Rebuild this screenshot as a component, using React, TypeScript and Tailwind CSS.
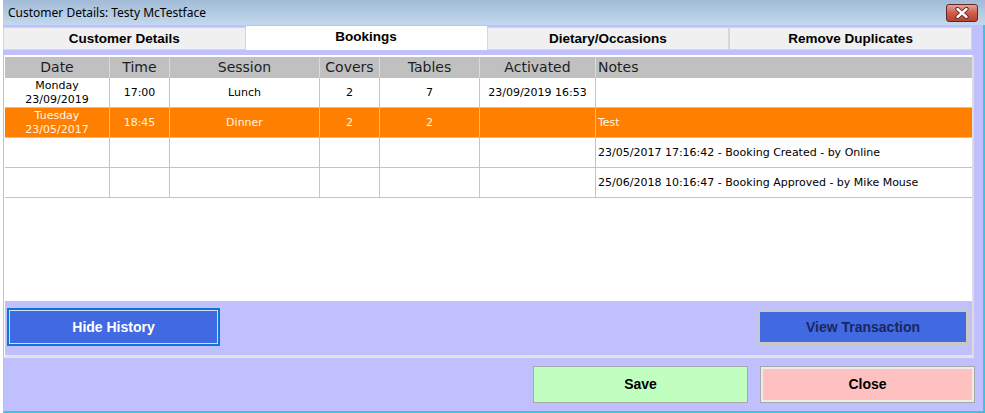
const rows = [
  { day: 'Monday', date: '23/09/2019', time: '17:00', session: 'Lunch', covers: '2', tables: '7', activated: '23/09/2019 16:53', notes: '', hot: false },
  { day: 'Tuesday', date: '23/05/2017', time: '18:45', session: 'Dinner', covers: '2', tables: '2', activated: '', notes: 'Test', hot: true },
  { day: '', date: '', time: '', session: '', covers: '', tables: '', activated: '', notes: '23/05/2017 17:16:42 - Booking Created - by Online', hot: false },
  { day: '', date: '', time: '', session: '', covers: '', tables: '', activated: '', notes: '25/06/2018 10:16:47 - Booking Approved - by Mike Mouse', hot: false },
];

const headers = ['Date', 'Time', 'Session', 'Covers', 'Tables', 'Activated'];

const tabs = ['Customer Details', 'Bookings', 'Dietary/Occasions', 'Remove Duplicates'];

const cols = 'grid grid-cols-[105px_60px_150px_60px_100px_116px_1fr]';

function CloseGlyph() {
  return (
    <svg width="16" height="12" viewBox="0 0 16 12" aria-hidden>
      <path d="M3.5 2 L12.5 10 M12.5 2 L3.5 10" stroke="#5a2020" strokeWidth="4.2" strokeLinecap="round" fill="none" />
      <path d="M3.5 2 L12.5 10 M12.5 2 L3.5 10" stroke="#ffffff" strokeWidth="2.4" strokeLinecap="round" fill="none" />
    </svg>
  );
}

export default function App() {
  return (
    <div className="flex h-[413px] w-[985px] flex-col bg-white" style={{ fontFamily: '"Liberation Sans", Arial, sans-serif' }}>
      {/* window caption */}
      <div className="ml-[3px] flex h-[25px] items-center justify-between bg-gradient-to-b from-[#a2bbd6] to-[#c2d8ee] pl-[5px] pr-[7px]">
        <span className="text-[12px] text-black" style={{ fontFamily: '"Noto Sans", sans-serif' }}>
          Customer Details: Testy McTestface
        </span>
        <div className="flex h-[18px] w-[32px] items-center justify-center rounded-[3px] border border-[#5e2a26] bg-gradient-to-b from-[#e5a195] via-[#cf5c4c] to-[#b8412f]">
          <CloseGlyph />
        </div>
      </div>

      <div className="ml-[3px] flex flex-1 flex-col border-b-2 border-l border-r-2 border-b-[#3ac6da] border-l-[#b2c6da] border-r-[#3ac6da] bg-[#c0c0ff]">
        {/* tabs */}
        <div className="-ml-[1px] mr-[11px] mt-[2px] flex h-[23px]">
          {tabs.map((t) => (
            <div
              key={t}
              className={
                t === 'Bookings'
                  ? '-mt-[1px] flex h-[24px] flex-1 items-center justify-center bg-white pb-[2px] text-[13.5px] font-bold text-black'
                  : 'flex flex-1 items-center justify-center border border-[#d6d6d6] bg-[#f0f0f0] pt-[2px] text-[13.5px] font-bold text-black'
              }
            >
              {t}
            </div>
          ))}
        </div>

        {/* bookings panel */}
        <div className="mr-[9px] mt-[5px] flex h-[303px] flex-col border-b-[3px] border-l border-r-2 border-b-[#e4e4e4] border-l-white border-r-[#dcdcdc]">
          <div className="flex-1 bg-white pt-[2px]" style={{ fontFamily: '"DejaVu Sans", Verdana, sans-serif' }}>
            <div className={`${cols} h-[21px] bg-[#c0c0c0] text-[14px] text-[#1e1e1e]`}>
              {headers.map((h) => (
                <div key={h} className="flex items-center justify-center border-r border-[#dadada]">
                  {h}
                </div>
              ))}
              <div className="flex items-center pl-[2px]">Notes</div>
            </div>
            {rows.map((r, i) => (
              <div
                key={i}
                className={`${cols} h-[30px] border-b border-[#c4c4c4] text-[11px] leading-[14px] ${r.hot ? 'bg-[#ff8000] text-[#fff4e8]' : 'text-black'}`}
              >
                <div className="flex flex-col items-center justify-center border-r border-[#c4c4c4]">
                  <span>{r.day}</span>
                  <span>{r.date}</span>
                </div>
                <div className="flex items-center justify-center border-r border-[#c4c4c4]">{r.time}</div>
                <div className="flex items-center justify-center border-r border-[#c4c4c4]">{r.session}</div>
                <div className="flex items-center justify-center border-r border-[#c4c4c4]">{r.covers}</div>
                <div className="flex items-center justify-center border-r border-[#c4c4c4]">{r.tables}</div>
                <div className="flex items-center justify-center border-r border-[#c4c4c4]">{r.activated}</div>
                <div className="flex items-center pl-[2px]">{r.notes}</div>
              </div>
            ))}
          </div>

          <div className="flex h-[54px] items-start justify-between bg-[#c0c0ff] pl-[2px] pr-[3px] pt-[7px]">
            <button className="h-[38px] w-[213px] border-2 border-[#0a78d6] p-0">
              <div className="flex h-full w-full items-center justify-center border border-[#d4dcf2] bg-[#4169e1] text-[14px] font-bold text-white">
                Hide History
              </div>
            </button>
            <button className="mt-[1px] flex h-[36px] w-[212px] items-center justify-center border-[3px] border-[#c8c8c8] bg-[#4169e1] text-[14px] font-bold text-[#1c2660]">
              View Transaction
            </button>
          </div>
        </div>

        {/* footer */}
        <div className="flex flex-1 items-start justify-end gap-[12px] pr-[8px] pt-[8px]">
          <button className="flex h-[37px] w-[215px] items-center justify-center border border-[#a8a8a8] bg-[#c0ffc0] text-[14px] font-bold text-black">
            Save
          </button>
          <button className="h-[37px] w-[215px] border border-[#a8a8a8] bg-[#ececec] p-[2px]">
            <div className="flex h-full w-full items-center justify-center bg-[#ffc0c0] text-[14px] font-bold text-black">
              Close
            </div>
          </button>
        </div>
      </div>
    </div>
  );
}
